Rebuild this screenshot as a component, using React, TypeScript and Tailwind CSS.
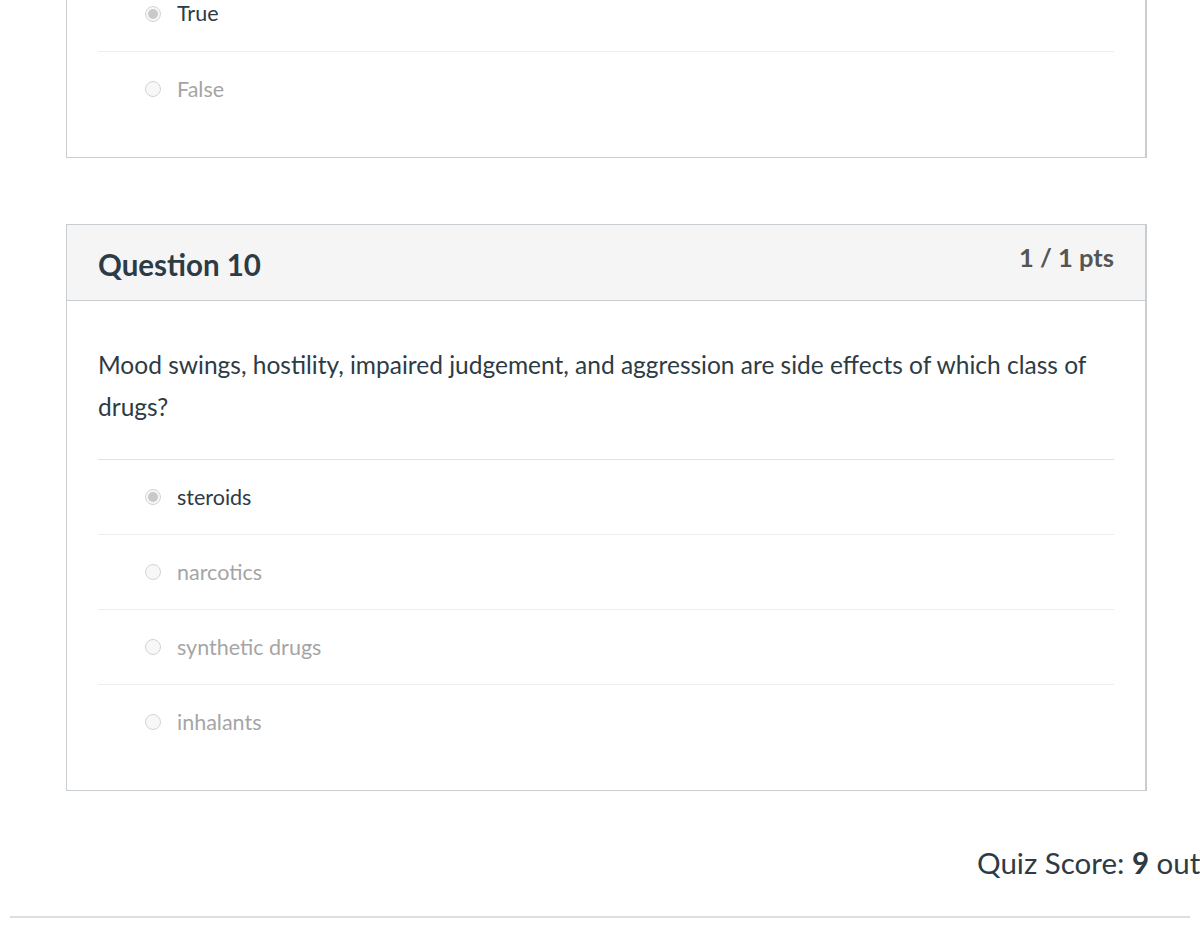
import React from 'react';

type Answer = { text: string; selected?: boolean };

function Radio({ selected }: { selected?: boolean }) {
  return (
    <span className="flex h-[16px] w-[16px] shrink-0 items-center justify-center rounded-full border border-[#d4d4d4] bg-[#f7f7f7]">
      {selected && <span className="h-[10px] w-[10px] rounded-full bg-[#c9c9c9]" />}
    </span>
  );
}

function AnswerRow({ answer, first }: { answer: Answer; first?: boolean }) {
  return (
    <div
      className={`flex h-[75px] items-center gap-[16px] pl-[47px] ${
        first ? 'border-t border-[#e3e3e3]' : 'border-t border-[#ededed]'
      }`}
    >
      <Radio selected={answer.selected} />
      <span
        className={`text-[21.5px] ${answer.selected ? 'text-[#2d3b45]' : 'text-[#a5a5a5]'}`}
      >
        {answer.text}
      </span>
    </div>
  );
}

const q10Answers: Answer[] = [
  { text: 'steroids', selected: true },
  { text: 'narcotics' },
  { text: 'synthetic drugs' },
  { text: 'inhalants' },
];

export default function App() {
  return (
    <div
      className="h-[927px] w-[1200px] overflow-hidden bg-white"
      style={{ fontFamily: 'Lato, "Open Sans", sans-serif' }}
    >
      {/* Previous question (cut off at top) */}
      <div className="ml-[66px] -mt-[24px] w-[1081px] border-b border-l border-r-2 border-[#c7cdd1] px-[31px] pb-[31px]">
        <div className="flex h-[75px] items-center gap-[16px] pl-[47px]">
          <Radio selected />
          <span className="text-[21.5px] text-[#2d3b45]">True</span>
        </div>
        <div className="flex h-[75px] items-center gap-[16px] border-t border-[#ededed] pl-[47px]">
          <Radio />
          <span className="text-[21.5px] text-[#a5a5a5]">False</span>
        </div>
      </div>

      {/* Question 10 */}
      <div className="ml-[66px] mt-[66px] w-[1081px] border border-r-2 border-[#c7cdd1]">
        <div className="flex h-[76px] items-start justify-between border-b border-[#c7cdd1] bg-[#f5f5f5] px-[31px]">
          <h2 className="pt-[22px] text-[29.5px] leading-[36px] font-bold text-[#2d3b45]">Question 10</h2>
          <span className="pt-[17px] text-[25.5px] leading-[30px] font-bold text-[#555555]">1 / 1 pts</span>
        </div>
        <div className="px-[31px] pb-[31px]">
          <p className="pt-[43px] pb-[31px] text-[24.5px] leading-[42px] text-[#2d3b45]">
            Mood swings, hostility, impaired judgement, and aggression are side effects of which class of
            drugs?
          </p>
          {q10Answers.map((a, i) => (
            <AnswerRow key={a.text} answer={a} first={i === 0} />
          ))}
        </div>
      </div>

      {/* Score */}
      <div className="mt-[52px] whitespace-nowrap pl-[977px] text-[29.5px] leading-[40px] text-[#2d3b45]">
        Quiz Score: <strong className="font-bold">9</strong> out of 10
      </div>
      <div className="mx-[10px] mt-[33px] border-t-2 border-[#dedede]" />
    </div>
  );
}
